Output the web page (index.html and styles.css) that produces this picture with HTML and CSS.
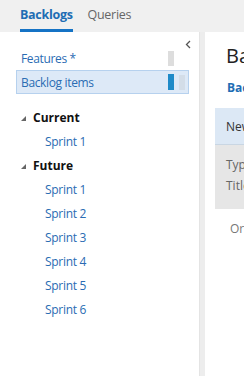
FILE: index.html
```html
<!DOCTYPE html>
<html lang="en">

<head>
  <meta charset="UTF-8">
  <meta name="viewport" content="width=device-width, initial-scale=1.0">
  <title>Backlogs</title>
  <link rel="stylesheet" href="styles.css">
</head>

<body>

  <div class="topbar">
    <span class="tab active">Backlogs</span>
    <span class="tab">Queries</span>
  </div>

  <div class="main">
    <div class="sidebar">
      <div class="collapse">
        <svg width="6" height="9" viewBox="0 0 6 9"><path d="M5 1 L1.5 4.5 L5 8" fill="none" stroke="#555" stroke-width="1.3"/></svg>
      </div>

      <ul class="levels">
        <li class="level">
          <span class="level-name">Features *</span>
          <span class="bar grey"></span>
        </li>
        <li class="level selected">
          <span class="level-name">Backlog items</span>
          <span class="bar blue"></span>
          <span class="bar faint"></span>
        </li>
      </ul>

      <ul class="tree">
        <li class="group"><span class="arrow"></span>Current</li>
        <li class="sprint">Sprint 1</li>
        <li class="group"><span class="arrow"></span>Future</li>
        <li class="sprint">Sprint 1</li>
        <li class="sprint">Sprint 2</li>
        <li class="sprint">Sprint 3</li>
        <li class="sprint">Sprint 4</li>
        <li class="sprint">Sprint 5</li>
        <li class="sprint">Sprint 6</li>
      </ul>
    </div>

    <div class="splitter"></div>

    <div class="content">
      <h1 class="title">Backlog items</h1>
      <div class="subnav">Backlog</div>
      <div class="new-item">New</div>
      <div class="new-form">
        <div class="field">Type</div>
        <div class="field">Title</div>
      </div>
      <div class="order">Order</div>
    </div>
  </div>

</body>

</html>
```

FILE: styles.css
```css
body {
  margin: 0;
  padding: 0;
  font-family: "Open Sans", sans-serif;
  font-size: 12px;
  background-color: #ffffff;
  width: 244px;
  height: 376px;
  overflow: hidden;
}

ul {
  list-style: none;
  margin: 0;
  padding: 0;
}

.topbar {
  height: 32px;
  background-color: #f0f0f0;
  display: flex;
  padding-left: 20px;
  box-sizing: border-box;
  gap: 15px;
}

.tab {
  font-size: 12.5px;
  color: #666;
  line-height: 30px;
  letter-spacing: -0.3px;
}

.tab.active {
  color: #1e6db4;
  font-weight: bold;
  border-bottom: 3px solid #1573c5;
  height: 29px;
}

.main {
  display: flex;
  height: 344px;
}

.sidebar {
  width: 199px;
  flex: none;
}

.collapse {
  height: 14px;
  padding-top: 4px;
  padding-right: 8px;
  text-align: right;
}

.collapse svg {
  display: inline-block;
}

.levels {
  margin-top: -4px;
  padding-left: 16px;
  width: 173px;
}

.level {
  height: 24px;
  display: flex;
  align-items: center;
  padding-left: 5px;
  box-sizing: border-box;
  color: #2a6cb3;
  letter-spacing: -0.35px;
}

.level.selected {
  background-color: #dde9f7;
  border: 1px solid #b6d1ee;
  padding-left: 4px;
}

.level-name {
  width: 147px;
}

.bar {
  width: 6px;
  height: 15px;
}

.bar.grey {
  background-color: #dddddd;
}

.bar.blue {
  background-color: #1e8ac8;
  height: 16px;
}

.bar.faint {
  background-color: #d3dde8;
  margin-left: 5px;
}

.tree {
  margin-top: 12px;
}

.tree li {
  height: 24px;
  line-height: 24px;
}

.group {
  font-weight: bold;
  color: #111;
  padding-left: 21px;
  display: flex;
  align-items: center;
}

.arrow {
  width: 0;
  height: 0;
  border-left: 5px solid transparent;
  border-bottom: 5px solid #666;
  margin-right: 7px;
  margin-top: 1px;
}

.sprint {
  color: #2a6cb3;
  padding-left: 45px;
  letter-spacing: -0.3px;
}

.splitter {
  width: 5px;
  flex: none;
  background-color: #ededed;
  border-left: 1px solid #e4e4e4;
}

.content {
  flex: 1;
  overflow: hidden;
  padding-left: 10px;
  white-space: nowrap;
}

.title {
  font-size: 20px;
  font-weight: normal;
  color: #222;
  margin: 10px 0 0 11px;
  line-height: 28px;
}

.subnav {
  margin: 9px 0 0 12px;
  font-weight: bold;
  color: #1e6db4;
  line-height: 18px;
}

.new-item {
  margin-top: 11px;
  height: 37px;
  line-height: 37px;
  background-color: #dce8f5;
  padding-left: 11px;
  color: #333;
  border-bottom: 1px solid #c9d6e3;
  box-sizing: border-box;
}

.new-form {
  background-color: #e6e6e6;
  height: 64px;
  padding-top: 9px;
  padding-left: 11px;
  box-sizing: border-box;
}

.field {
  line-height: 21px;
  color: #666;
}

.order {
  margin-top: 10px;
  padding-left: 15px;
  color: #777;
  line-height: 20px;
}
```
